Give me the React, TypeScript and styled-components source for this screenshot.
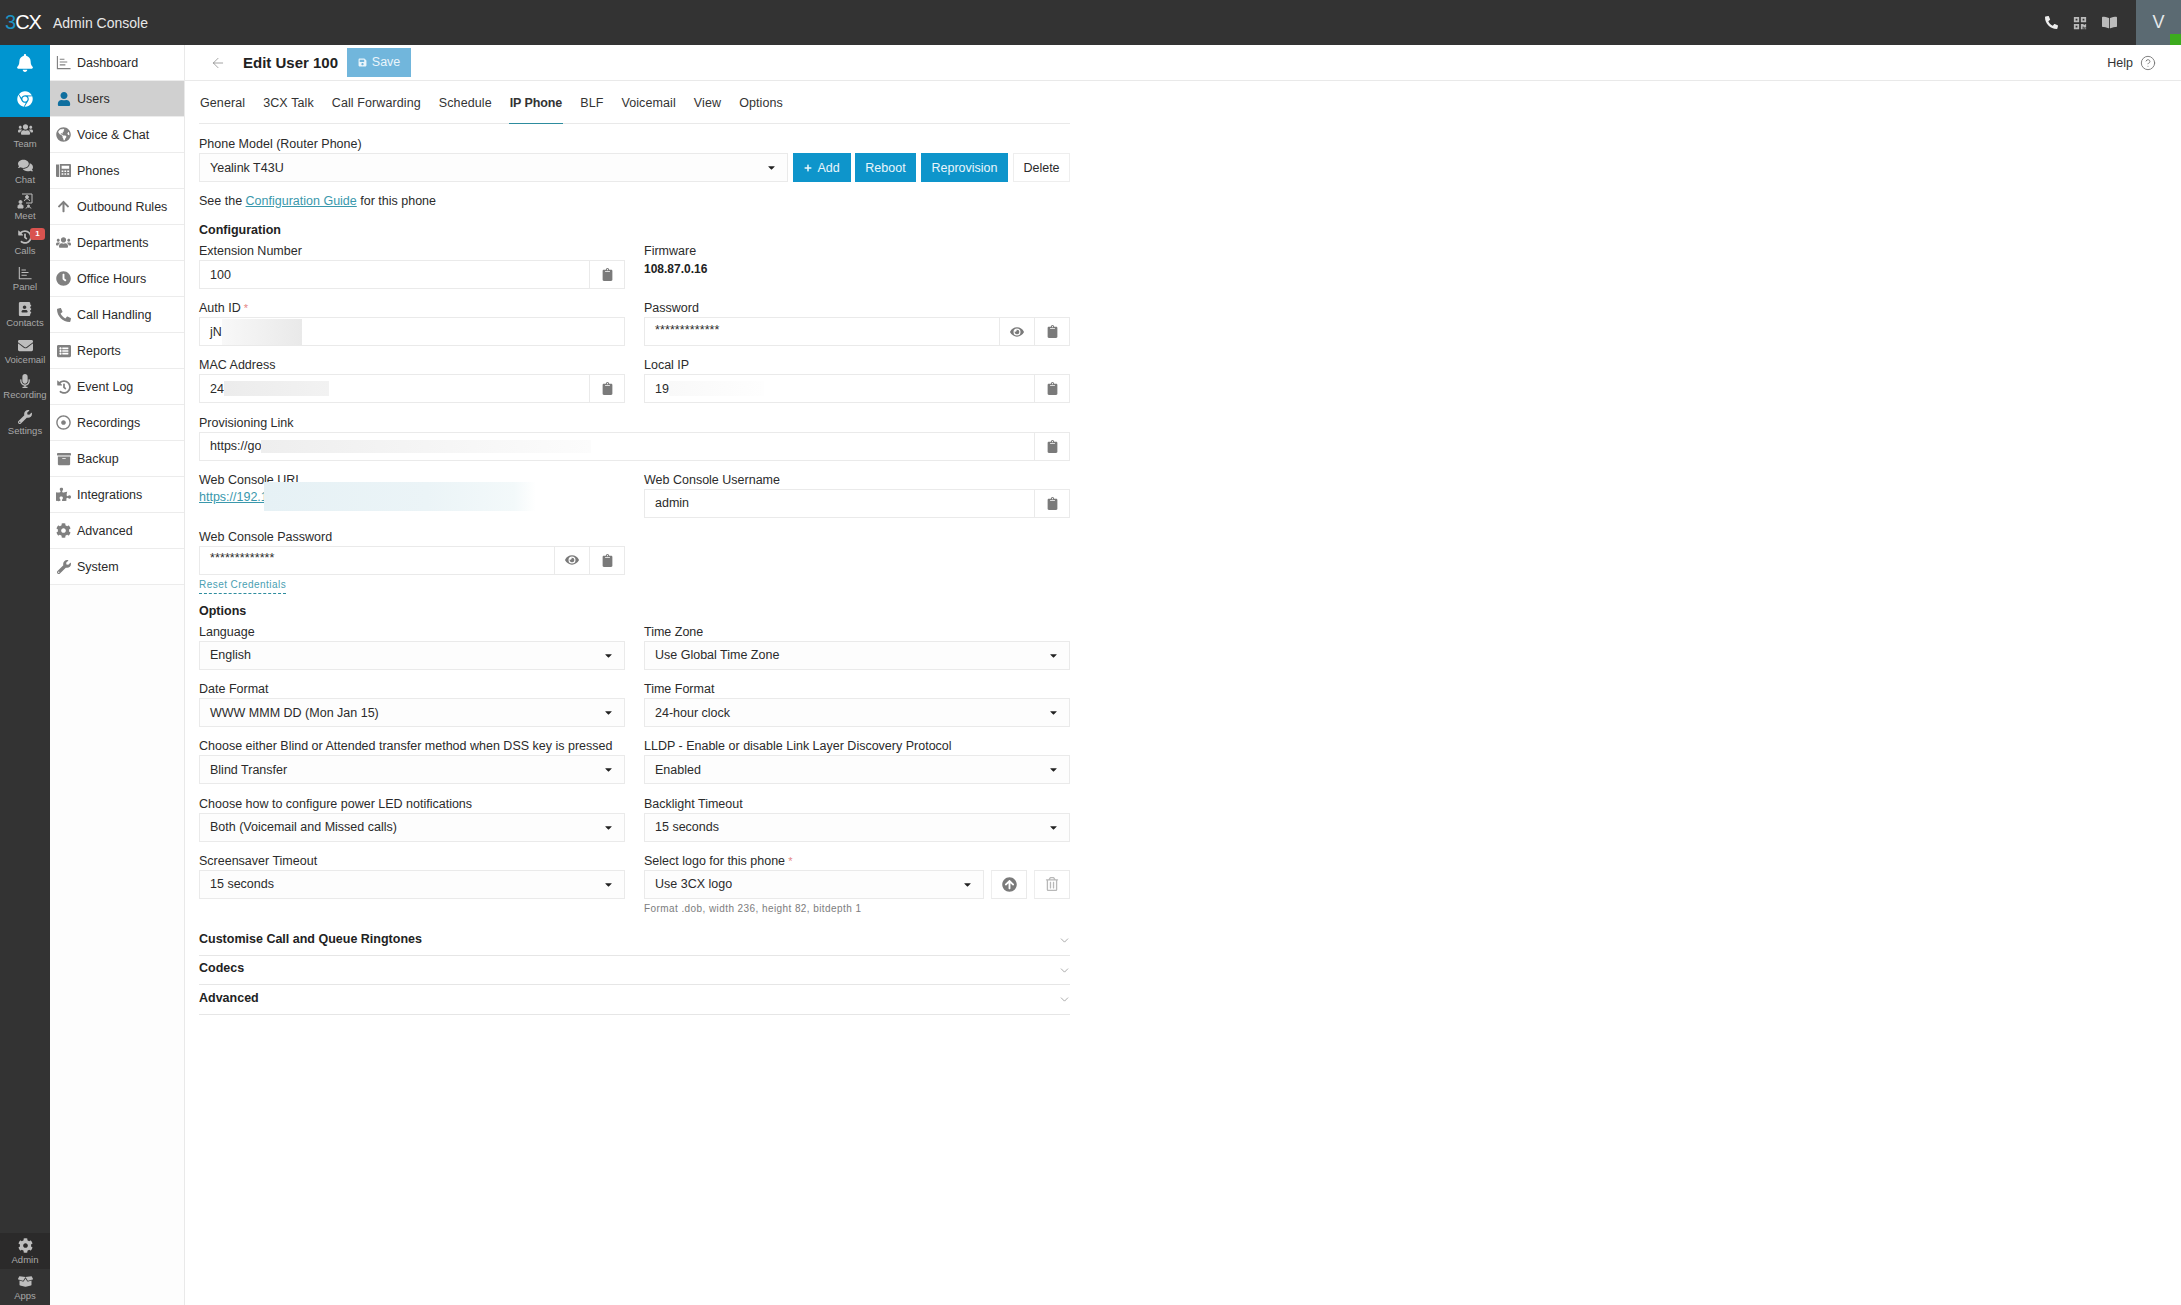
import React from 'react';
import styled, { createGlobalStyle } from 'styled-components';
import {
  FaBell, FaChrome, FaUsers, FaComments, FaHistory, FaAddressBook, FaEnvelope, FaMicrophone, FaWrench, FaCog, FaBoxOpen,
  FaUser, FaGlobeAmericas, FaArrowUp, FaClock, FaPhone, FaListAlt, FaRegDotCircle, FaArchive, FaPuzzlePiece,
  FaSave, FaClipboard, FaEye, FaArrowCircleUp, FaRegTrashAlt, FaCaretDown, FaQrcode, FaBookOpen, FaPlus,
} from 'react-icons/fa';
import { ArrowLeft, ChevronDown, CircleHelp } from 'lucide-react';

const Global = createGlobalStyle`
  html, body { margin: 0; padding: 0; height: 100%; background: #fff; overflow: hidden; }
  body { font-family: "Liberation Sans", Arial, sans-serif; font-size: 13px; color: #222; }
  * { box-sizing: border-box; }
`;

const Page = styled.div`display: flex; flex-direction: column; height: 100vh;`;
const Header = styled.header`
  height: 45px; flex: none; background: #333; display: flex; align-items: center; color: #fff;
`;
const Logo = styled.div`
  width: 53px; padding-left: 5px; font-size: 20px; letter-spacing: -1px; font-weight: 400; color: #fff; white-space: nowrap;
  span { color: #1c93c4; }
`;
const Brand = styled.div`font-size: 14px; color: #e8e8e8;`;
const HeaderIcons = styled.div`margin-left: auto; display: flex; align-items: center; gap: 15px; padding-right: 19px; color: #eee;`;
const Avatar = styled.div`
  position: relative; width: 45px; height: 45px; background: #5b6a72; color: #e6e9eb; font-size: 18px;
  display: flex; align-items: center; justify-content: center;
  &::after { content: ''; position: absolute; right: 0; bottom: 0; width: 11px; height: 11px; background: #3cab1e; }
`;
const Body = styled.div`flex: 1; display: flex; min-height: 0;`;
const Rail = styled.aside`width: 50px; flex: none; background: #333; display: flex; flex-direction: column;`;
const RailBlue = styled.div`
  height: 36px; background: #0095d0; color: #fff; display: flex; align-items: center; justify-content: center;
`;
const RailItem = styled.div<{ $dark?: boolean }>`
  position: relative; height: 36px; display: flex; flex-direction: column; align-items: center; justify-content: center;
  color: #bdbdbd; background: ${p => (p.$dark ? '#2b2a2a' : 'transparent')};
  span { font-size: 9.5px; line-height: 11px; color: #a8a8a8; margin-top: 1px; white-space: nowrap; }
`;
const RailBottom = styled.div`margin-top: auto;`;
const Badge = styled.b`
  position: absolute; top: 3px; right: 5px; width: 15px; height: 12px; background: #d9534f; color: #fff;
  border-radius: 3px; font-size: 8px; line-height: 12px; text-align: center;
`;
const Nav = styled.nav`width: 135px; flex: none; background: #fdfdfd; border-right: 1px solid #e9e9e9;`;
const NavItem = styled.div<{ $active?: boolean }>`
  height: 36px; display: flex; align-items: center; gap: 6px; padding-left: 6px; border-bottom: 1px solid #ececec;
  background: ${p => (p.$active ? '#d0d0d0' : '#fff')}; color: #2a2a2a; font-size: 12.5px;
  svg { color: ${p => (p.$active ? '#0f6f9f' : '#808080')}; }
`;
const NavIcon = styled.span`width: 15px; height: 15px; display: flex; align-items: center; justify-content: center;`;
const Main = styled.main`flex: 1; min-width: 0; display: flex; flex-direction: column;`;
const TitleBar = styled.div`
  height: 36px; flex: none; border-bottom: 1px solid #e9e9e9; display: flex; align-items: center; padding-left: 25px; color: #777;
`;
const Title = styled.h1`margin: 0 9px 0 17px; font-size: 15px; font-weight: 700; color: #222;`;
const SaveButton = styled.div`
  height: 29px; width: 64px; margin-top: -1px; background: #71b6dc; color: #eaf5fb; display: flex; align-items: center; justify-content: center; gap: 5px; font-size: 12.5px;
`;
const Help = styled.div`margin-left: auto; padding-right: 25px; display: flex; align-items: center; gap: 7px; color: #333; font-size: 12.5px; svg { color: #777; }`;
const Content = styled.div`width: 885px; padding-left: 14px;`;
const Tabs = styled.div`display: flex; gap: 16px; height: 43px; border-bottom: 1px solid #e9e9e9;`;
const Tab = styled.div<{ $active?: boolean }>`
  padding: 0 1px; line-height: 45px; height: 43px; color: #333; font-size: 12.5px; font-weight: ${p => (p.$active ? 700 : 400)};
  letter-spacing: ${p => (p.$active ? '-0.1px' : '0.1px')};
  border-bottom: ${p => (p.$active ? '1px solid #2d8c9e' : 'none')};
`;
const Label = styled.label`display: block; height: 18px; line-height: 18px; font-size: 12.5px; color: #2b2b2b; white-space: nowrap; i { color: #d9534f; font-style: normal; font-size: 11px; opacity: .7; }`;
const ModelRow = styled.div`margin-top: 11px;`;
const ModelControls = styled.div`display: flex;`;
const Control = styled.div`
  position: relative; height: 29px; flex: 1; min-width: 0; display: flex; align-items: center; border: 1px solid #eaeaea; background: #fff;
  overflow: hidden; white-space: nowrap;
`;
const ControlText = styled.span<{ $stars?: boolean }>`
  padding-left: 10px; font-size: 12.5px; color: #2b2b2b; ${p => (p.$stars ? 'margin-top: -4px; letter-spacing: .1px;' : '')}
`;
const SelectBox = styled(Control)`background: #fdfdfd; padding-right: 10px; justify-content: space-between;`;
const Caret = styled(FaCaretDown)`width: 11px; height: 11px; color: #222; flex: none;`;
const ActionButton = styled.div<{ $w: number; $ml: number; $plain?: boolean }>`
  height: 29px; width: ${p => p.$w}px; margin-left: ${p => p.$ml}px; flex: none; display: flex; align-items: center; justify-content: center; gap: 5px;
  font-size: 12.5px; background: ${p => (p.$plain ? '#fff' : '#0e95cb')}; color: ${p => (p.$plain ? '#2b2b2b' : '#eaf6fb')};
  border: ${p => (p.$plain ? '1px solid #eee' : 'none')};
`;
const Para = styled.p`margin: 11px 0 0; height: 17px; line-height: 17px; font-size: 12.5px; color: #2b2b2b;`;
const A = styled.a`color: #3a98ac; text-decoration: underline;`;
const Heading = styled.h3<{ $top: number }>`margin: ${p => p.$top}px 0 3px; height: 17px; line-height: 17px; font-size: 12.5px; font-weight: 700; color: #222;`;
const FormGrid = styled.div`display: grid; grid-template-columns: 426px 426px; column-gap: 19px; row-gap: 10.2px;`;
const Field = styled.div<{ $full?: boolean }>`position: relative; min-width: 0; ${p => (p.$full ? 'grid-column: 1 / 3;' : '')}`;
const InputRow = styled.div`display: flex;`;
const Addon = styled.div<{ $dim?: boolean }>`
  width: 35px; height: 29px; flex: none; border: 1px solid #eaeaea; border-left: none; display: flex; align-items: center; justify-content: center; color: ${p => (p.$dim ? '#b8b8b8' : '#7a7a7a')};
`;
const LogoBtn = styled(Addon)`width: 36px; margin-left: 7px; border-left: 1px solid #eee;`;
const Value = styled.div`font-weight: 700; font-size: 12px; line-height: 18px; color: #222;`;
const UrlLink = styled(A)`font-size: 12.5px; line-height: 17px; display: block; margin-top: 0;`;
const Blur = styled.span<{ $w: number; $h: number; $c: string; $c2: string }>`
  display: inline-block; vertical-align: middle; width: ${p => p.$w}px; height: ${p => p.$h}px;
  background: linear-gradient(90deg, ${p => p.$c}, ${p => p.$c2});
`;
const UrlBlur = styled.span`
  position: absolute; left: 65px; top: 11px; width: 272px; height: 29px; background: linear-gradient(90deg, #e6f1f5, #ebf4f7 60%, #f3f9fa 92%, #fff);
`;
const Reset = styled.a`
  display: inline-block; margin-top: 2px; height: 17px; line-height: 15px; font-size: 10px; letter-spacing: .45px; color: #4aa0b2; border-bottom: 1px dashed #2d8c9e; 
`;
const Hint = styled.div`font-size: 10px; letter-spacing: .42px; line-height: 14px; color: #7d7d7d; margin-top: 3px;`;
const Accordion = styled.div<{ $first?: boolean }>`
  height: ${p => (p.$first ? 30 : 29.5)}px; margin-top: ${p => (p.$first ? 10 : 0)}px; border-bottom: 1px solid #e6e6e6; display: flex; align-items: center; justify-content: space-between;
  font-weight: 700; font-size: 12.5px; color: #222; padding-bottom: 3px; svg { color: #888; margin-right: -1px; margin-top: 4px; }
`;

const sz = 15;
const Chart = ({ s = sz }: { s?: number }) => (
  <svg width={s} height={s} viewBox="0 0 16 16" fill="none" stroke="currentColor" strokeWidth="1.2">
    <path d="M1.5 1v13.5H15.5M4 4.5h5M4 7.5h8M4 10.5h6" />
  </svg>
);
const Handset = ({ s = sz }: { s?: number }) => (
  <svg width={s} height={s} viewBox="0 0 16 16" fill="currentColor">
    <path d="M0 1.5h3.2V15H1.2A1.2 1.2 0 0 1 0 13.8zM4 1h11a1 1 0 0 1 1 1v12a1 1 0 0 1-1 1H4zM6 3v3h8V3zM6 8v1.6h1.8V8zm3 0v1.6h1.8V8zm3 0v1.6h2V8zM6 11v1.6h1.8V11zm3 0v1.6h1.8V11zm3 0v1.6h2V11z" fillRule="evenodd" />
  </svg>
);
const Meet = () => (
  <svg width="16" height="16" viewBox="0 0 16 16" fill="none" stroke="currentColor" strokeWidth="1">
    <path d="M5 1h10v9H9" />
    <circle cx="10" cy="4" r="1.4" fill="currentColor" />
    <path d="M7.5 8c0-3 5-3 5 0" />
    <circle cx="3.5" cy="9" r="1.5" fill="currentColor" />
    <path d="M1 15v-1.5c0-1.500 1-2 2.500-2s2.500.5 2.500 2V15z" fill="currentColor" />
    <circle cx="11.500" cy="13" r="1" fill="currentColor" />
    <path d="M9 15.500c0-2 5-2 5 0" />
  </svg>
);

const navItems: [string, React.ReactNode][] = [
  ['Dashboard', <Chart />],
  ['Users', <FaUser size={14} />],
  ['Voice & Chat', <FaGlobeAmericas size={15} />],
  ['Phones', <Handset />],
  ['Outbound Rules', <FaArrowUp size={13} />],
  ['Departments', <FaUsers size={15} />],
  ['Office Hours', <FaClock size={15} />],
  ['Call Handling', <FaPhone size={14} style={{ transform: 'scaleX(-1)' }} />],
  ['Reports', <FaListAlt size={14} />],
  ['Event Log', <FaHistory size={14} />],
  ['Recordings', <FaRegDotCircle size={15} />],
  ['Backup', <FaArchive size={14} />],
  ['Integrations', <FaPuzzlePiece size={15} />],
  ['Advanced', <FaCog size={15} />],
  ['System', <FaWrench size={14} />],
];

const railItems: [string, React.ReactNode][] = [
  ['Team', <FaUsers size={15} />],
  ['Chat', <FaComments size={15} />],
  ['Meet', <Meet />],
  ['Calls', <FaHistory size={14} />],
  ['Panel', <Chart s={14} />],
  ['Contacts', <FaAddressBook size={14} />],
  ['Voicemail', <FaEnvelope size={15} />],
  ['Recording', <FaMicrophone size={14} />],
  ['Settings', <FaWrench size={14} />],
];

const tabs = ['General', '3CX Talk', 'Call Forwarding', 'Schedule', 'IP Phone', 'BLF', 'Voicemail', 'View', 'Options'];

const Clip = () => <Addon><FaClipboard size={13} /></Addon>;
const Eye = () => <Addon><FaEye size={14} /></Addon>;

const Select = ({ label, value, req }: { label: string; value: string; req?: boolean }) => (
  <Field>
    <Label>{label}{req && <i> *</i>}</Label>
    <SelectBox><ControlText>{value}</ControlText><Caret /></SelectBox>
  </Field>
);

export default function App() {
  return (
    <Page>
      <Global />
      <Header>
        <Logo><span>3</span>CX</Logo>
        <Brand>Admin Console</Brand>
        <HeaderIcons>
          <FaPhone size={13} style={{ transform: 'scaleX(-1)' }} />
          <FaQrcode size={14} color="#bbb" />
          <FaBookOpen size={15} color="#bbb" />
        </HeaderIcons>
        <Avatar>V</Avatar>
      </Header>
      <Body>
        <Rail>
          <RailBlue><FaBell size={18} /></RailBlue>
          <RailBlue><FaChrome size={16} /></RailBlue>
          {railItems.map(([n, ic]) => (
            <RailItem key={n}>
              {ic}
              <span>{n}</span>
              {n === 'Calls' && <Badge>1</Badge>}
            </RailItem>
          ))}
          <RailBottom>
            <RailItem $dark><FaCog size={15} /><span>Admin</span></RailItem>
            <RailItem><FaBoxOpen size={15} /><span>Apps</span></RailItem>
          </RailBottom>
        </Rail>
        <Nav>
          {navItems.map(([n, ic]) => (
            <NavItem key={n} $active={n === 'Users'}><NavIcon>{ic}</NavIcon>{n}</NavItem>
          ))}
        </Nav>
        <Main>
          <TitleBar>
            <ArrowLeft size={16} strokeWidth={1} />
            <Title>Edit User 100</Title>
            <SaveButton><FaSave size={9} />Save</SaveButton>
            <Help>Help <CircleHelp size={16} strokeWidth={1.4} /></Help>
          </TitleBar>
          <Content>
            <Tabs>
              {tabs.map(t => <Tab key={t} $active={t === 'IP Phone'}>{t}</Tab>)}
            </Tabs>
            <ModelRow>
              <Label>Phone Model (Router Phone)</Label>
              <ModelControls>
                <SelectBox><ControlText>Yealink T43U</ControlText><Caret /></SelectBox>
                <ActionButton $w={58} $ml={5}><FaPlus size={8} />Add</ActionButton>
                <ActionButton $w={61} $ml={4}>Reboot</ActionButton>
                <ActionButton $w={87} $ml={5}>Reprovision</ActionButton>
                <ActionButton $w={57} $ml={5} $plain>Delete</ActionButton>
              </ModelControls>
            </ModelRow>
            <Para>See the <A>Configuration Guide</A> for this phone</Para>
            <Heading $top={12}>Configuration</Heading>
            <FormGrid>
              <Field>
                <Label>Extension Number</Label>
                <InputRow><Control><ControlText>100</ControlText></Control><Clip /></InputRow>
              </Field>
              <Field>
                <Label>Firmware</Label>
                <Value>108.87.0.16</Value>
              </Field>
              <Field>
                <Label>Auth ID<i> *</i></Label>
                <InputRow>
                  <Control>
                    <ControlText>jN</ControlText>
                    <Blur $w={80} $h={26} $c="#f8f8f8" $c2="#e9e9e9" />
                  </Control>
                </InputRow>
              </Field>
              <Field>
                <Label>Password</Label>
                <InputRow><Control><ControlText $stars>*************</ControlText></Control><Eye /><Clip /></InputRow>
              </Field>
              <Field>
                <Label>MAC Address</Label>
                <InputRow>
                  <Control>
                    <ControlText>24</ControlText>
                    <Blur $w={105} $h={15} $c="#ececec" $c2="#f2f2f2" />
                  </Control>
                  <Clip />
                </InputRow>
              </Field>
              <Field>
                <Label>Local IP</Label>
                <InputRow>
                  <Control>
                    <ControlText>19</ControlText>
                    <Blur $w={95} $h={15} $c="#f9f9f9" $c2="#fefefe" />
                  </Control>
                  <Clip />
                </InputRow>
              </Field>
              <Field $full>
                <Label>Provisioning Link</Label>
                <InputRow>
                  <Control>
                    <ControlText>https://go</ControlText>
                    <Blur $w={330} $h={13} $c="#eeeeee" $c2="#fcfcfc" />
                  </Control>
                  <Clip />
                </InputRow>
              </Field>
              <Field>
                <Label>Web Console URI</Label>
                <UrlLink>https://192.1</UrlLink>
                <UrlBlur />
              </Field>
              <Field>
                <Label>Web Console Username</Label>
                <InputRow><Control><ControlText>admin</ControlText></Control><Clip /></InputRow>
              </Field>
              <Field>
                <Label>Web Console Password</Label>
                <InputRow><Control><ControlText $stars>*************</ControlText></Control><Eye /><Clip /></InputRow>
                <Reset>Reset Credentials</Reset>
              </Field>
            </FormGrid>
            <Heading $top={9}>Options</Heading>
            <FormGrid>
              <Select label="Language" value="English" />
              <Select label="Time Zone" value="Use Global Time Zone" />
              <Select label="Date Format" value="WWW MMM DD (Mon Jan 15)" />
              <Select label="Time Format" value="24-hour clock" />
              <Select label="Choose either Blind or Attended transfer method when DSS key is pressed" value="Blind Transfer" />
              <Select label="LLDP - Enable or disable Link Layer Discovery Protocol" value="Enabled" />
              <Select label="Choose how to configure power LED notifications" value="Both (Voicemail and Missed calls)" />
              <Select label="Backlight Timeout" value="15 seconds" />
              <Select label="Screensaver Timeout" value="15 seconds" />
              <Field>
                <Label>Select logo for this phone<i> *</i></Label>
                <InputRow>
                  <SelectBox><ControlText>Use 3CX logo</ControlText><Caret /></SelectBox>
                  <LogoBtn><FaArrowCircleUp size={15} /></LogoBtn>
                  <LogoBtn $dim><FaRegTrashAlt size={14} /></LogoBtn>
                </InputRow>
                <Hint>Format .dob, width 236, height 82, bitdepth 1</Hint>
              </Field>
            </FormGrid>
            <Accordion $first>Customise Call and Queue Ringtones<ChevronDown size={13} strokeWidth={1.3} /></Accordion>
            <Accordion>Codecs<ChevronDown size={13} strokeWidth={1.3} /></Accordion>
            <Accordion>Advanced<ChevronDown size={13} strokeWidth={1.3} /></Accordion>
          </Content>
        </Main>
      </Body>
    </Page>
  );
}
